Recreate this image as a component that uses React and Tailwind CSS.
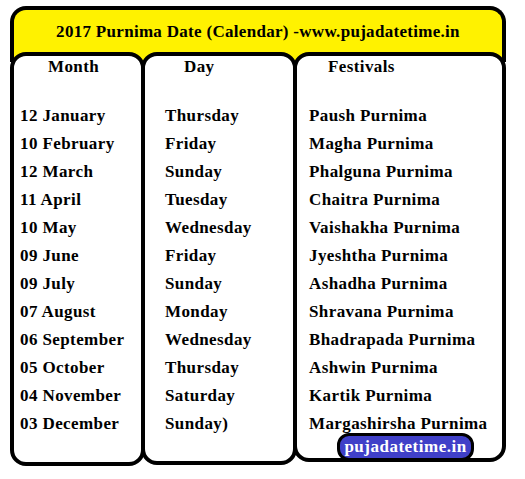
const rows = [
  ['12 January', 'Thursday', 'Paush Purnima'],
  ['10 February', 'Friday', 'Magha Purnima'],
  ['12 March', 'Sunday', 'Phalguna Purnima'],
  ['11 April', 'Tuesday', 'Chaitra Purnima'],
  ['10 May', 'Wednesday', 'Vaishakha Purnima'],
  ['09 June', 'Friday', 'Jyeshtha Purnima'],
  ['09 July', 'Sunday', 'Ashadha Purnima'],
  ['07 August', 'Monday', 'Shravana Purnima'],
  ['06 September', 'Wednesday', 'Bhadrapada Purnima'],
  ['05 October', 'Thursday', 'Ashwin Purnima'],
  ['04 November', 'Saturday', 'Kartik Purnima'],
  ['03 December', 'Sunday)', 'Margashirsha Purnima'],
];

function Column({ title, items, className, headPad, bodyPad, children }) {
  return (
    <div className={`relative bg-white border-4 border-black rounded-[16px] ${className}`}>
      <div className={`h-[22px] leading-[22px] tracking-[0.4px] ${headPad}`}>{title}</div>
      <div className={`mt-[24px] ${bodyPad}`}>
        {items.map((t, i) => (
          <div key={i} className="h-[28px] leading-[28px] tracking-[0.4px]">{t}</div>
        ))}
      </div>
      {children}
    </div>
  );
}

export default function App() {
  return (
    <div
      className="w-[525px] h-[479px] bg-white pt-[6px] pl-[10px] text-black font-bold text-[17px]"
      style={{ fontFamily: '"Liberation Serif", "Times New Roman", serif' }}
    >
      <div className="w-[496px]">
        <div className="h-[56px] bg-[#fff200] border-4 border-b-0 border-black rounded-t-[16px] text-center pt-[12px] leading-[20px] tracking-[0.3px]">
          2017 Purnima Date (Calendar) -www.pujadatetime.in
        </div>
        <div className="flex -mt-[10px] items-start">
          <Column
            title="Month"
            items={rows.map((r) => r[0])}
            className="w-[135px] h-[414px]"
            headPad="pl-[34px]"
            bodyPad="pl-[6px]"
          />
          <Column
            title="Day"
            items={rows.map((r) => r[1])}
            className="w-[156px] h-[413px] -ml-[4px]"
            headPad="pl-[39px]"
            bodyPad="pl-[20px]"
          />
          <Column
            title="Festivals"
            items={rows.map((r) => r[2])}
            className="w-[213px] h-[410px] -ml-[4px]"
            headPad="pl-[31px]"
            bodyPad="pl-[12px]"
          >
            <div className="absolute left-[40px] bottom-[-3px] h-[28px] w-[137px] bg-[#4040c8] border-[3px] border-black rounded-[12px] text-white text-[17px] leading-[22px] text-center tracking-[0.5px]">
              pujadatetime.in
            </div>
          </Column>
        </div>
      </div>
    </div>
  );
}
